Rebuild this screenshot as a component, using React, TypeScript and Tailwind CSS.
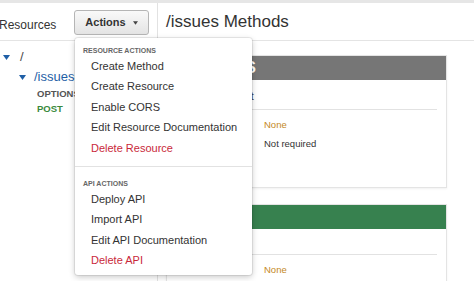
const Caret = ({ className }: { className: string }) => (
  <svg width="7" height="5" viewBox="0 0 7 5" className={className}>
    <path d="M0 0h7L3.5 5z" fill="currentColor" />
  </svg>
);

const MenuHeader = ({ label }: { label: string }) => (
  <div className="h-[12px] pl-[8px] flex items-center text-[7px] font-bold text-[#666] leading-none">{label}</div>
);

const MenuItem = ({ label, danger }: { label: string; danger?: boolean }) => (
  <div className={`h-[20.5px] pl-[16px] flex items-center text-[11px] leading-none ${danger ? "text-[#c9283a]" : "text-[#333]"}`}>
    {label}
  </div>
);

// label column sits under the open menu, so only the value shows
const Row = ({ value, accent }: { value: string; accent?: boolean }) => (
  <div className="h-[19px] flex items-center text-[9.5px]">
    <span className="w-[97px] shrink-0" />
    <span className={accent ? "text-[#c4891e]" : "text-[#333]"}>{value}</span>
  </div>
);

export default function App() {
  return (
    <div className="relative w-[474px] h-[281px] overflow-hidden bg-white font-['Liberation_Sans',Arial,sans-serif] text-[#333]">
      <div className="h-[3px] bg-[#e6e6e6]" />
      <div className="flex h-[278px]">
        <aside className="w-[158px] shrink-0 border-r border-[#e2e2e2]">
          <div className="h-[38px] border-b border-[#e4e4e4] flex items-start justify-between pr-[8px]">
            <span className="ml-[-1px] mt-[15px] text-[12px] leading-[14px] text-[#333]">Resources</span>
            <button className="mt-[7px] h-[25px] w-[75px] flex items-center justify-center gap-[7px] rounded-[3px] border border-[#b5b5b5] bg-gradient-to-b from-[#f9f9f9] to-[#e4e4e4] text-[11px] font-bold text-[#333]">
              Actions
              <Caret className="text-[#444] w-[5px] h-[4px]" />
            </button>
          </div>
          <div className="pt-[6px]">
            <div className="h-[20px] flex items-center">
              <Caret className="ml-[3px] text-[#1f5fa6]" />
              <span className="ml-[10px] text-[13px] text-[#4a4a4a]">/</span>
            </div>
            <div className="h-[20px] flex items-center">
              <Caret className="ml-[19px] text-[#1f5fa6]" />
              <span className="ml-[8px] text-[13px] text-[#1f5fa6]">/issues</span>
            </div>
            <div className="h-[15px] flex items-center pl-[37px] text-[9.5px] font-bold text-[#555]">OPTIONS</div>
            <div className="h-[15px] flex items-center pl-[37px] text-[9.5px] font-bold text-[#3a8a3c]">POST</div>
          </div>
        </aside>
        <main className="flex-1">
          <div className="h-[38px] border-b border-[#e4e4e4] flex items-center pl-[8px]">
            <h1 className="text-[17px] text-[#333]">/issues Methods</h1>
          </div>
          <div className="pl-[8px] pt-[14px] w-[289px]">
            <div className="border border-[#e4e4e4] shadow-[0_1px_2px_rgba(0,0,0,0.06)] pb-[33px]">
              <div className="h-[24px] bg-[#767676] flex items-center pl-[17px] text-[16px] font-bold text-white">OPTIONS</div>
              <div className="pt-[10px] pl-[6px] text-[11px] leading-[12px] text-[#444]">Method Request</div>
              <div className="mt-[7px] mx-[9px] border-t border-[#e2e2e2]" />
              <div className="pt-[6px]">
                <Row value="None" accent />
                <Row value="Not required" />
              </div>
            </div>
            <div className="mt-[16px] border border-[#e4e4e4] shadow-[0_1px_2px_rgba(0,0,0,0.06)] pb-[30px]">
              <div className="h-[24px] bg-[#37814f] flex items-center pl-[12px] text-[16px] font-bold text-white">POST</div>
              <div className="h-[20px]" />
              <div className="mt-[5px] mx-[9px] border-t border-[#e2e2e2]" />
              <div className="pt-[6px]">
                <Row value="None" accent />
              </div>
            </div>
          </div>
        </main>
      </div>

      <div className="absolute left-[75px] top-[38px] w-[177px] h-[237px] rounded-[3px] bg-white shadow-[0_0_0_1px_rgba(0,0,0,0.07),0_2px_6px_rgba(0,0,0,0.22)] pt-[6px]">
        <MenuHeader label="RESOURCE ACTIONS" />
        <MenuItem label="Create Method" />
        <MenuItem label="Create Resource" />
        <MenuItem label="Enable CORS" />
        <MenuItem label="Edit Resource Documentation" />
        <MenuItem label="Delete Resource" danger />
        <div className="mt-[7.5px] border-t border-[#e2e2e2]" />
        <div className="pt-[10px]">
          <MenuHeader label="API ACTIONS" />
          <MenuItem label="Deploy API" />
          <MenuItem label="Import API" />
          <MenuItem label="Edit API Documentation" />
          <MenuItem label="Delete API" danger />
        </div>
      </div>
    </div>
  );
}
